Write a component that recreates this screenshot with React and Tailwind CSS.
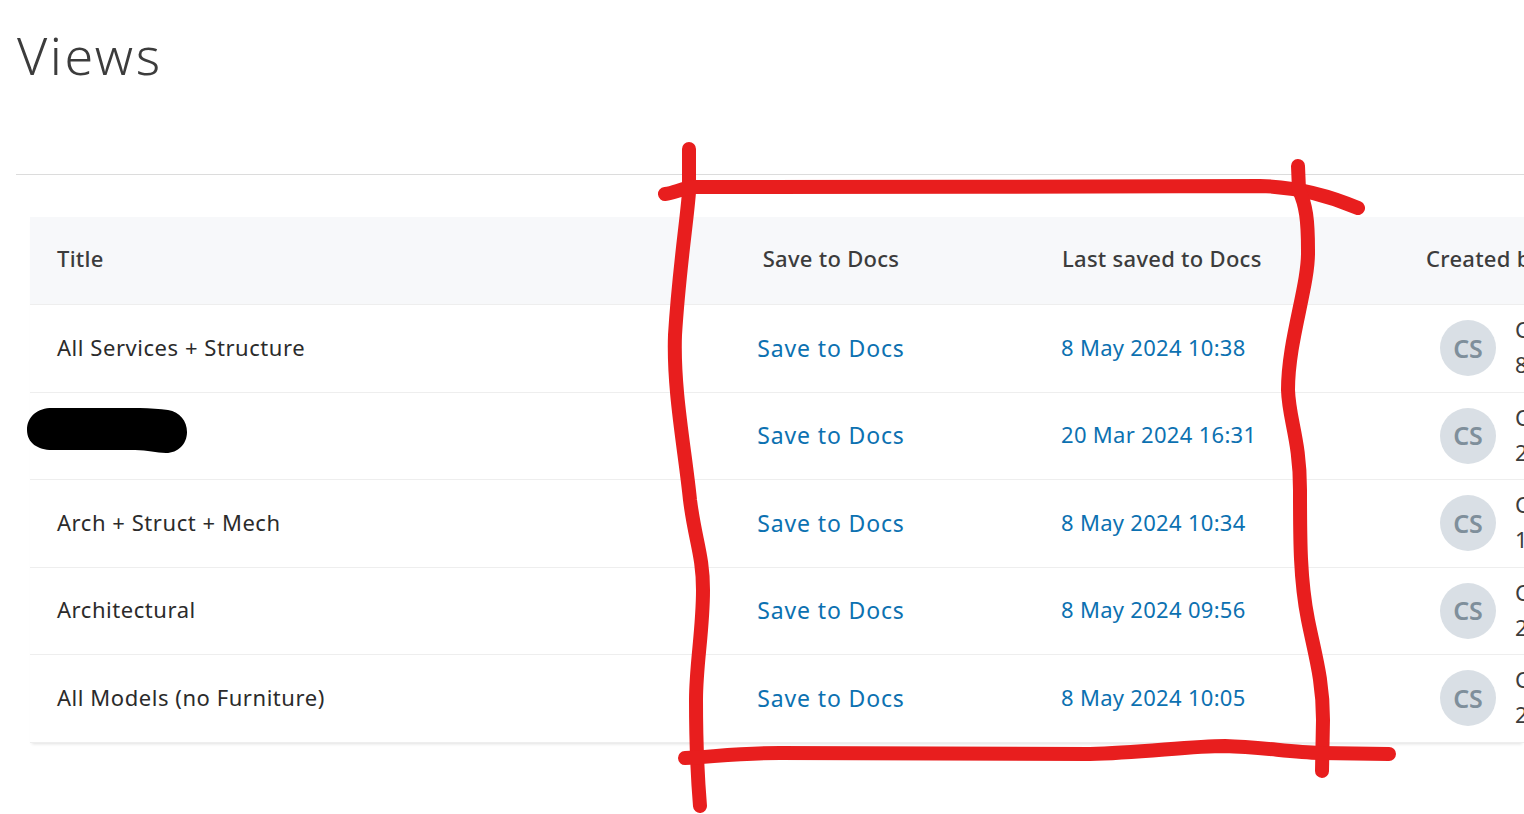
const rows = [
  { title: 'All Services + Structure', saved: '8 May 2024 10:38', first: '8' },
  { title: '', saved: '20 Mar 2024 16:31', first: '2' },
  { title: 'Arch + Struct + Mech', saved: '8 May 2024 10:34', first: '1' },
  { title: 'Architectural', saved: '8 May 2024 09:56', first: '2' },
  { title: 'All Models (no Furniture)', saved: '8 May 2024 10:05', first: '2' },
]

const gridCols = 'grid grid-cols-[700px_200px_400px_1fr] items-center'

function Row({ row }) {
  return (
    <div className={`${gridCols} h-[87.5px] border-b border-[#eeeeee] text-[22px] tracking-[0.55px]`}>
      <div className="pb-[2px] pl-[27px] text-[#2b2b2b]">{row.title}</div>
      <a className="pb-[1px] pl-[2px] text-center text-[23px] tracking-[0.85px] text-[#0c71b1]">Save to Docs</a>
      <a className="pb-[2px] pl-[131px] tracking-[0.3px] text-[#0c71b1]">{row.saved}</a>
      <div className="flex items-center gap-[19px] pl-[110px] text-[#3c3c3c]">
        <span className="flex h-[56px] w-[56px] shrink-0 items-center justify-center rounded-full bg-[#d9dfe5] text-[25px] font-semibold tracking-normal text-[#7f8f9b]">
          CS
        </span>
        <div className="flex flex-col gap-[6px] pb-[2px] leading-[29px]">
          <span>C</span>
          <span>{row.first}</span>
        </div>
      </div>
    </div>
  )
}

export default function App() {
  return (
    <div className="relative h-[814px] w-[1524px] overflow-hidden bg-white font-['Noto_Sans',sans-serif]">
      <h1 className="ml-[16px] h-[175px] border-b border-[#dcdcdc] pl-[1px] pt-[20px] text-[52px] font-[350] leading-[70px] tracking-[2.6px] text-[#3c3c3c]">
        Views
      </h1>

      <div className="ml-[30px] mt-[42px] shadow-[0_3px_3px_-2px_rgba(0,0,0,0.12)]">
        <div className={`${gridCols} h-[88px] border-b border-[#eeeeee] bg-[#f7f8fa] text-[22px] font-medium tracking-[0.28px] text-[#3c3c3c]`}>
          <div className="pb-[4px] pl-[27px]">Title</div>
          <div className="pb-[4px] pl-[2px] text-center">Save to Docs</div>
          <div className="whitespace-nowrap pb-[4px] pl-[132px]">Last saved to Docs</div>
          <div className="whitespace-nowrap pb-[4px] pl-[96px]">Created by</div>
        </div>
        {rows.map((row, i) => (
          <Row key={i} row={row} />
        ))}
      </div>

      {/* hand drawn markup on top of the screenshot */}
      <svg className="absolute left-0 top-0 h-[814px] w-[1524px]" viewBox="0 0 1524 814" fill="none">
        <path
          d="M27 430C27 416 38 408 52 408L140 408C150 408 160 409 168 410C180 412 187 421 187 432C187 444 178 453 166 453C156 453 148 450 135 450L52 450C38 450 27 443 27 430Z"
          fill="#000000"
        />
        <g stroke="#e81e1e" strokeWidth="14" strokeLinecap="round" strokeLinejoin="round">
          <path d="M689 149L689 192C687 220 679 270 675 335C673 390 685 450 690 500C695 540 703 555 703 590C703 630 696 665 696 700C696 730 697 770 700 806" />
          <path d="M665 194C675 193 682 188 695 187C800 187 1150 187 1260 186C1300 187 1330 196 1358 208" />
          <path d="M1298 166L1299 190C1306 205 1308 220 1308 250C1309 285 1288 340 1288 390C1289 420 1300 440 1300 490C1300 540 1300 580 1308 620C1315 655 1323 680 1323 720L1322 771" />
          <path d="M685 758C710 757 740 753 780 753L1090 754C1140 753 1190 746 1225 746C1260 747 1290 752 1320 753L1389 754" />
        </g>
      </svg>
    </div>
  )
}
